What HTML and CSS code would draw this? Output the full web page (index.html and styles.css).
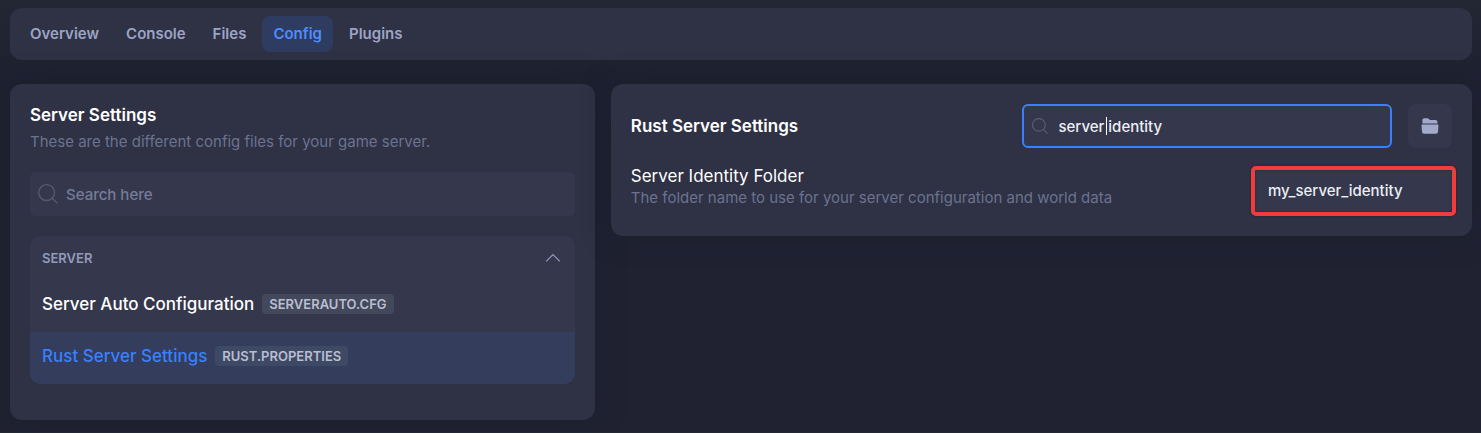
FILE: index.html
```html
<!DOCTYPE html>
<html lang="en">
<head>
    <meta charset="UTF-8">
    <meta name="viewport" content="width=device-width, initial-scale=1.0">
    <title>Server Config</title>
    <link rel="stylesheet" href="styles.css">
</head>
<body>
    <nav class="tabs">
        <a class="tab" href="#overview">Overview</a>
        <a class="tab" href="#console">Console</a>
        <a class="tab" href="#files">Files</a>
        <a class="tab active" href="#config">Config</a>
        <a class="tab" href="#plugins">Plugins</a>
    </nav>

    <main class="layout">
        <section class="card sidebar">
            <h2 class="title">Server Settings</h2>
            <p class="description">These are the different config files for your game server.</p>

            <div class="search">
                <svg class="search-icon" viewBox="0 0 20 20" aria-hidden="true">
                    <circle cx="8.6" cy="8.6" r="7.9"/>
                    <path d="M14.2 14.2 19.4 19.4"/>
                </svg>
                <input type="text" class="input" placeholder="Search here" aria-label="Search config files">
            </div>

            <div class="group">
                <button class="group-header" type="button">
                    <span>SERVER</span>
                    <svg class="chevron" viewBox="0 0 16 10" aria-hidden="true">
                        <path d="M1.2 8.4 8 1.6 14.8 8.4"/>
                    </svg>
                </button>
                <a class="file" href="#serverauto">
                    <span>Server Auto Configuration</span>
                    <span class="badge">SERVERAUTO.CFG</span>
                </a>
                <a class="file active" href="#rust">
                    <span>Rust Server Settings</span>
                    <span class="badge">RUST.PROPERTIES</span>
                </a>
            </div>
        </section>

        <section class="card content">
            <div class="content-header">
                <h2 class="title">Rust Server Settings</h2>
                <div class="search focused">
                    <svg class="search-icon small" viewBox="0 0 20 20" aria-hidden="true">
                        <circle cx="8.6" cy="8.6" r="7.9"/>
                        <path d="M14.2 14.2 19.4 19.4"/>
                    </svg>
                    <input type="text" class="input" value="server identity" aria-label="Search settings">
                    <span class="caret"></span>
                </div>
                <button class="folder-button" type="button" aria-label="Open file">
                    <svg class="folder-icon" viewBox="0 0 18 16" aria-hidden="true">
                        <path d="M1.4 5.4V2.6C1.4 1.1 2.2.3 3.6.3h2.5c.8 0 1.2.2 1.8.7l.6.6c.4.4.8.5 1.3.5h4.4c1.5 0 2.3.8 2.3 2.2v1.100z"/>
                        <path d="M1.6 6.4h14.800c.8 0 1.200.5 1.100 1.200l-.5 6.200c-.2 1.200-.9 1.900-2 1.900H3c-1.100 0-1.800-.7-2-1.900L.5 7.600c-.1-.7.3-1.200 1.100-1.200z"/>
                    </svg>
                </button>
            </div>

            <div class="setting">
                <div class="setting-text">
                    <label class="setting-name" for="identity">Server Identity Folder</label>
                    <p class="description">The folder name to use for your server configuration and world data</p>
                </div>
                <div class="highlight">
                    <input type="text" class="input" id="identity" value="my_server_identity">
                </div>
            </div>
        </section>
    </main>
</body>
</html>
```

FILE: styles.css
```css
* {
    box-sizing: border-box;
}
body {
    font-family: Inter, sans-serif;
    font-size: 15px;
    line-height: 20px;
    margin: 0;
    padding: 8px 9px 12px 10px;
    background: linear-gradient(#222734, #1f2131 80px, #202232 240px);
    background-color: #202232;
    color: #fff;
}
.tabs {
    display: flex;
    gap: 5px;
    padding: 8px 9px;
    margin-bottom: 24px;
    border-radius: 12px;
    background-color: #2f3144;
}
.tab {
    padding: 8px 11px;
    border-radius: 8px;
    color: #9ba4c4;
    font-weight: 600;
    text-decoration: none;
}
.tab.active {
    background-color: #2d3c60;
    color: #4d8dff;
}
.layout {
    display: flex;
    align-items: flex-start;
    gap: 16px;
}
.card {
    padding: 20px;
    border-radius: 12px;
    background-color: #2f3144;
    box-shadow: 0 0 30px rgba(25, 27, 42, 0.4);
}
.sidebar {
    flex: 0 0 40%;
    padding-bottom: 36px;
}
.content {
    flex: 1;
}
.title {
    margin: 0;
    font-size: 17px;
    font-weight: 600;
    line-height: 22px;
}
.description {
    margin: 0;
    color: #6a7390;
}
.sidebar .description {
    margin: 6px 0 20px;
}
.search {
    position: relative;
    display: flex;
    align-items: center;
}
.search-icon {
    position: absolute;
    left: 8px;
    width: 20px;
    height: 20px;
    fill: none;
    stroke: #555b74;
    stroke-width: 1.3;
}
.search-icon.small {
    left: 10px;
    width: 16px;
    height: 16px;
    stroke-width: 1.5;
}
.input {
    width: 100%;
    height: 44px;
    padding: 0 36px;
    border: none;
    border-radius: 6px;
    outline: none;
    background-color: #35384c;
    color: #eceef5;
    font: 500 15px Inter, sans-serif;
}
.input::placeholder {
    color: #757c99;
    opacity: 1;
}
.group {
    margin-top: 20px;
    border-radius: 10px;
    background-color: #35384c;
    overflow: hidden;
}
.group-header {
    display: flex;
    align-items: center;
    justify-content: space-between;
    width: 100%;
    height: 44px;
    padding: 0 14px 0 12px;
    border: none;
    background: none;
    color: #929bbb;
    font: 600 13px Inter, sans-serif;
}
.chevron {
    width: 16px;
    height: 10px;
    fill: none;
    stroke: #929bbb;
    stroke-width: 1.2;
}
.file {
    display: flex;
    align-items: center;
    gap: 8px;
    height: 52px;
    padding: 0 12px 4px;
    color: #fff;
    font-size: 17px;
    font-weight: 500;
    text-decoration: none;
}
.file.active {
    background-color: #343d5b;
    color: #3880ff;
}
.badge {
    padding: 0 7px;
    border-radius: 4px;
    background-color: #44485b;
    color: #b9bed2;
    font-size: 13px;
    font-weight: 600;
}
.file.active .badge {
    background-color: #3e4965;
}
.content-header {
    display: flex;
    align-items: center;
    gap: 16px;
}
.content-header .title {
    flex: 1;
}
.content-header .search {
    flex: 0 0 45%;
}
.focused .input {
    border: 2px solid #3880ff;
    padding: 0 34px;
}
.caret {
    position: absolute;
    left: 84px;
    width: 1px;
    height: 18px;
    background-color: #fff;
}
.folder-button {
    display: flex;
    align-items: center;
    justify-content: center;
    width: 44px;
    height: 44px;
    padding: 0;
    border: none;
    border-radius: 8px;
    background-color: #35384c;
}
.folder-icon {
    width: 18px;
    height: 16px;
    fill: #a2aac9;
}
.setting {
    display: flex;
    align-items: flex-start;
    justify-content: space-between;
    padding: 16px 0 4px;
}
.setting-name {
    display: block;
    font-size: 17px;
    line-height: 24px;
}
.highlight {
    position: relative;
    width: 200px;
    margin-top: 4px;
}
.highlight .input {
    display: block;
    padding: 0 16px;
}
/* red frame drawn over the field */
.highlight::after {
    content: "";
    position: absolute;
    inset: -2px -4px -4px -1px;
    border: 4px solid #f03c3c;
    border-radius: 5px;
    box-shadow: 0 0 2px rgba(20, 20, 30, 0.6), inset 0 0 2px rgba(20, 20, 30, 0.6);
    pointer-events: none;
}
```
